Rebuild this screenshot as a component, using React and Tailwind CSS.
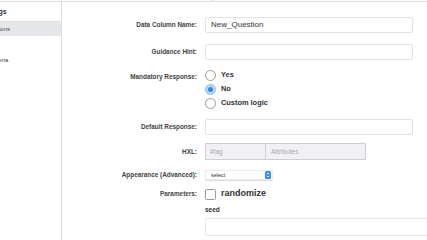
import React from "react";

const font = { fontFamily: '"Liberation Sans", Arial, sans-serif' };

function Label({ children, className = "" }) {
  return (
    <div className={`w-[135px] shrink-0 text-right text-[6.4px] font-bold text-[#444] ${className}`}>
      {children}
    </div>
  );
}

function Radio({ checked, label }) {
  return (
    <div className="flex items-center h-[14px]">
      {checked ? (
        <div className="w-[11px] h-[11px] rounded-full bg-[#b9d8f7] border border-[#8dbdf0] flex items-center justify-center">
          <div className="w-[5px] h-[5px] rounded-full bg-[#2f87e0]" />
        </div>
      ) : (
        <div className="w-[11px] h-[11px] rounded-full bg-white border border-[#9a9a9a]" />
      )}
      <span className="ml-[5px] text-[7.4px] font-bold text-[#333]">{label}</span>
    </div>
  );
}

export default function App() {
  return (
    <div className="w-[427px] h-[240px] relative overflow-hidden bg-white" style={font}>
      <div className="absolute top-[1px] left-0 right-0 h-px bg-[#dcdcdc]" />
      <svg className="absolute top-0 left-[206px]" width="14" height="3" viewBox="0 0 14 3">
        <path d="M0 1.5 L5 1.5 L7 0 L9 1.5 L14 1.5" fill="white" stroke="#dcdcdc" strokeWidth="1" />
      </svg>
      <div className="flex h-full pt-[2px]">
        <div className="w-[62px] shrink-0 border-r border-[#dedede] overflow-hidden">
          <div className="h-[20px] border-b border-[#dedede] flex items-center overflow-hidden">
            <span className="text-[7px] font-bold text-[#333] whitespace-nowrap ml-[-21px] mt-[1px]">Settings</span>
          </div>
          <div className="h-[14px] bg-[#e6e7ea] flex items-center overflow-hidden">
            <span className="text-[6px] text-[#444] whitespace-nowrap ml-[-17px]">Questions</span>
          </div>
          <div className="h-[18px]" />
          <div className="h-[12px] flex items-center overflow-hidden">
            <span className="text-[6px] text-[#444] whitespace-nowrap ml-[-11px]">Criteria</span>
          </div>
        </div>
        <div className="flex-1 flex flex-col pt-[15px]">
          <div className="flex items-center h-[16px]">
            <Label>Data Column Name:</Label>
            <div className="ml-[8px] w-[208px] h-[16px] border border-[#e3e3e3] rounded-[2px] flex items-center px-[5px] text-[8px] text-[#333]">
              New_Question
            </div>
          </div>
          <div className="flex items-center h-[16px] mt-[11px]">
            <Label>Guidance Hint:</Label>
            <div className="ml-[8px] w-[208px] h-[16px] border border-[#e3e3e3] rounded-[2px]" />
          </div>
          <div className="flex mt-[8px]">
            <Label className="mt-[4px]">Mandatory Response:</Label>
            <div className="ml-[8px] flex flex-col">
              <Radio label="Yes" />
              <Radio checked label="No" />
              <Radio label="Custom logic" />
            </div>
          </div>
          <div className="flex items-center h-[16px] mt-[9px]">
            <Label>Default Response:</Label>
            <div className="ml-[8px] w-[208px] h-[16px] border border-[#e3e3e3] rounded-[2px]" />
          </div>
          <div className="flex items-center h-[17px] mt-[8px]">
            <Label>HXL:</Label>
            <div className="ml-[8px] flex h-[17px]">
              <div className="w-[61px] h-full bg-[#f1f1f3] border border-[#cfcfd3] flex items-center px-[4px] text-[6.5px] text-[#aaa]">
                #tag
              </div>
              <div className="w-[100px] h-full bg-[#f1f1f3] border border-l-0 border-[#cfcfd3] flex items-center px-[5px] text-[6.5px] text-[#aaa]">
                Attributes
              </div>
            </div>
          </div>
          <div className="flex items-center h-[10px] mt-[10px]">
            <Label>Appearance (Advanced):</Label>
            <div className="ml-[8px] w-[68px] h-[10px] bg-white border border-[#ececec] rounded-[2px] flex items-center justify-between pl-[5px] pr-[1px] shadow-[0_0.5px_1px_rgba(0,0,0,0.15)]">
              <span className="text-[5.5px] text-[#333]">select</span>
              <div className="w-[6px] h-[8px] rounded-[1.5px] bg-[#3a8ef0] flex items-center justify-center">
                <svg width="4" height="6" viewBox="0 0 4 6">
                  <path d="M0.8 2.2 L2 1 L3.2 2.2 M0.8 3.8 L2 5 L3.2 3.8" fill="none" stroke="white" strokeWidth="0.8" />
                </svg>
              </div>
            </div>
          </div>
          <div className="flex items-center h-[12px] mt-[8px]">
            <Label>Parameters:</Label>
            <div className="ml-[8px] flex items-center">
              <div className="w-[11px] h-[11px] border border-[#9a9a9a] rounded-[1.5px] bg-white" />
              <span className="ml-[5px] text-[9px] font-bold text-[#333]">randomize</span>
            </div>
          </div>
          <div className="ml-[143px] mt-[6px] text-[6.5px] font-bold text-[#333] h-[8px] leading-[8px]">seed</div>
          <div className="ml-[143px] mt-[4px] h-[18px] border border-[#e8e8e8] rounded-[2px] mr-[-10px]" />
        </div>
      </div>
    </div>
  );
}
